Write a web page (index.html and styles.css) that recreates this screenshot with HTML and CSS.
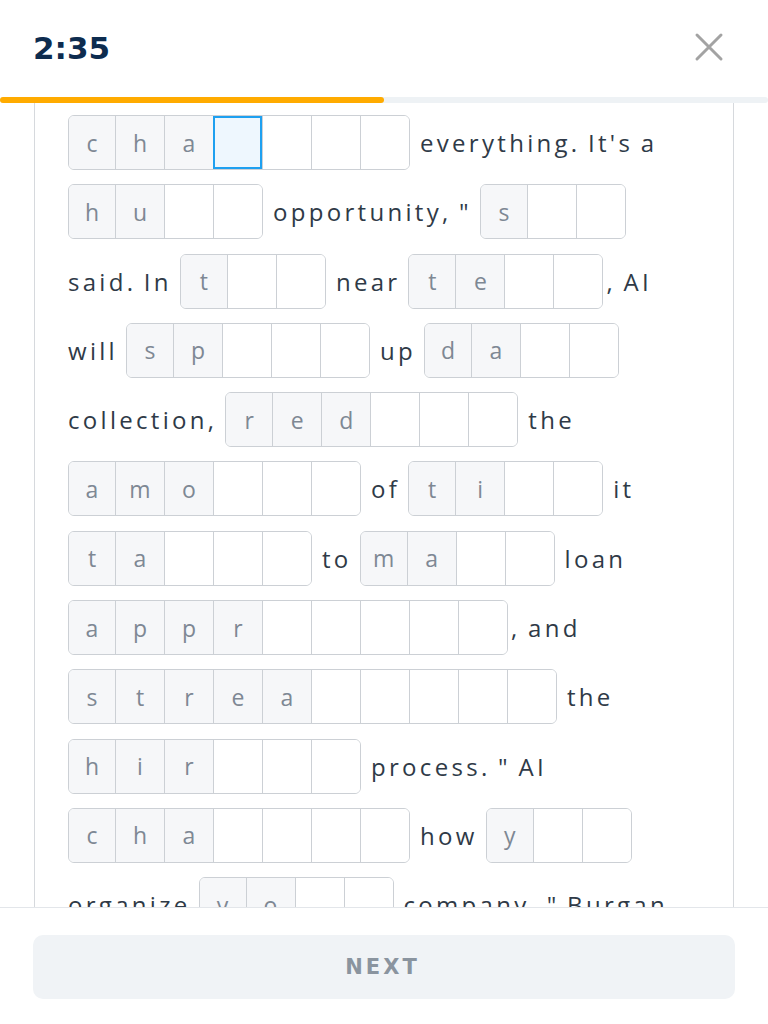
FILE: index.html
```html
<!DOCTYPE html>
<html>
<head>
<meta charset="utf-8">
<link rel="stylesheet" href="styles.css">
</head>
<body>
<div class="app">
  <header class="top">
    <div class="timer">2:35</div>
    <svg class="close" width="30" height="30" viewBox="0 0 30 30"><path d="M3 3 L27 27 M27 3 L3 27" stroke="#a3a3a3" stroke-width="3" stroke-linecap="round" fill="none"/></svg>
  </header>
  <div class="progress"><div class="fill"></div></div>
  <main class="card">
    <div class="line"><span class="word-box"><span class="c f">c</span><span class="c f">h</span><span class="c f">a</span><span class="c active"></span><span class="c"></span><span class="c"></span><span class="c"></span></span><span class="t">everything. It's a</span></div>
    <div class="line"><span class="word-box"><span class="c f">h</span><span class="c f">u</span><span class="c"></span><span class="c"></span></span><span class="t">opportunity, "</span><span class="word-box"><span class="c f">s</span><span class="c"></span><span class="c"></span></span></div>
    <div class="line"><span class="t">said. In</span><span class="word-box"><span class="c f">t</span><span class="c"></span><span class="c"></span></span><span class="t">near</span><span class="word-box"><span class="c f">t</span><span class="c f">e</span><span class="c"></span><span class="c"></span></span><span class="t p">, AI</span></div>
    <div class="line"><span class="t">will</span><span class="word-box"><span class="c f">s</span><span class="c f">p</span><span class="c"></span><span class="c"></span><span class="c"></span></span><span class="t">up</span><span class="word-box"><span class="c f">d</span><span class="c f">a</span><span class="c"></span><span class="c"></span></span></div>
    <div class="line"><span class="t">collection,</span><span class="word-box"><span class="c f">r</span><span class="c f">e</span><span class="c f">d</span><span class="c"></span><span class="c"></span><span class="c"></span></span><span class="t">the</span></div>
    <div class="line"><span class="word-box"><span class="c f">a</span><span class="c f">m</span><span class="c f">o</span><span class="c"></span><span class="c"></span><span class="c"></span></span><span class="t">of</span><span class="word-box"><span class="c f">t</span><span class="c f">i</span><span class="c"></span><span class="c"></span></span><span class="t">it</span></div>
    <div class="line"><span class="word-box"><span class="c f">t</span><span class="c f">a</span><span class="c"></span><span class="c"></span><span class="c"></span></span><span class="t">to</span><span class="word-box"><span class="c f">m</span><span class="c f">a</span><span class="c"></span><span class="c"></span></span><span class="t">loan</span></div>
    <div class="line"><span class="word-box"><span class="c f">a</span><span class="c f">p</span><span class="c f">p</span><span class="c f">r</span><span class="c"></span><span class="c"></span><span class="c"></span><span class="c"></span><span class="c"></span></span><span class="t p">, and</span></div>
    <div class="line"><span class="word-box"><span class="c f">s</span><span class="c f">t</span><span class="c f">r</span><span class="c f">e</span><span class="c f">a</span><span class="c"></span><span class="c"></span><span class="c"></span><span class="c"></span><span class="c"></span></span><span class="t">the</span></div>
    <div class="line"><span class="word-box"><span class="c f">h</span><span class="c f">i</span><span class="c f">r</span><span class="c"></span><span class="c"></span><span class="c"></span></span><span class="t">process. " AI</span></div>
    <div class="line"><span class="word-box"><span class="c f">c</span><span class="c f">h</span><span class="c f">a</span><span class="c"></span><span class="c"></span><span class="c"></span><span class="c"></span></span><span class="t">how</span><span class="word-box"><span class="c f">y</span><span class="c"></span><span class="c"></span></span></div>
    <div class="line"><span class="t">organize</span><span class="word-box"><span class="c f">y</span><span class="c f">o</span><span class="c"></span><span class="c"></span></span><span class="t">company. " Burgan</span></div>
  </main>
  <footer class="bottom">
    <button class="next">NEXT</button>
  </footer>
</div>
</body>
</html>
```
FILE: styles.css
```css
* { box-sizing: border-box; }
html, body { margin: 0; padding: 0; background: #fff; }
body { font-family: "Open Sans", Lato, sans-serif; }
.app { width: 768px; height: 1024px; display: flex; flex-direction: column; overflow: hidden; }
.top { height: 97px; flex: none; display: flex; align-items: center; justify-content: space-between; padding: 0 44px 0 33px; }
.timer { font-family: "DejaVu Sans", sans-serif; font-weight: 700; font-size: 31px; color: #0d2c4f; margin-top: -2px; }
.close { display: block; margin-top: -4px; }
.progress { height: 6px; flex: none; background: #eef2f5; border-radius: 3px; }
.fill { width: 384px; height: 6px; background: #ffab00; border-radius: 3px; }
.card { flex: 1; min-height: 0; overflow: hidden; margin: 0 34px; border-left: 1px solid #d6d9dd; border-right: 1px solid #d6d9dd; padding: 12px 0 0 33px; }
.line { display: flex; align-items: center; height: 55px; margin-bottom: 14.3px; white-space: nowrap; }
.word-box { display: inline-flex; height: 55px; border: 1.5px solid #ccd0d5; border-radius: 6px; overflow: hidden; margin-right: 10px; }
.t + .word-box { margin-left: 8px; }
.c { width: 49px; height: 100%; display: flex; align-items: center; justify-content: center; border-left: 1.5px solid #ccd0d5; font-size: 23px; color: #7e8894; background: #fff; }
.c:first-child { border-left: none; width: 46px; }
.c.f { background: #f6f7f9; }
.c.active { background: #eef7fe; outline: 2px solid #1ea0f0; outline-offset: -2px; }
.t { font-size: 24px; color: #2f3a47; letter-spacing: 3.3px; word-spacing: -2px; }
.t.p { margin-left: -7px; }
.bottom { height: 117px; flex: none; border-top: 1px solid #e3e6ea; padding: 27px 33px 0 33px; background: #fff; }
.next { width: 100%; height: 64px; border: none; border-radius: 10px; background: #f0f3f6; font-family: "DejaVu Sans", sans-serif; font-weight: 700; font-size: 21px; letter-spacing: 3px; padding-left: 3px; color: #8a949f; }
```
